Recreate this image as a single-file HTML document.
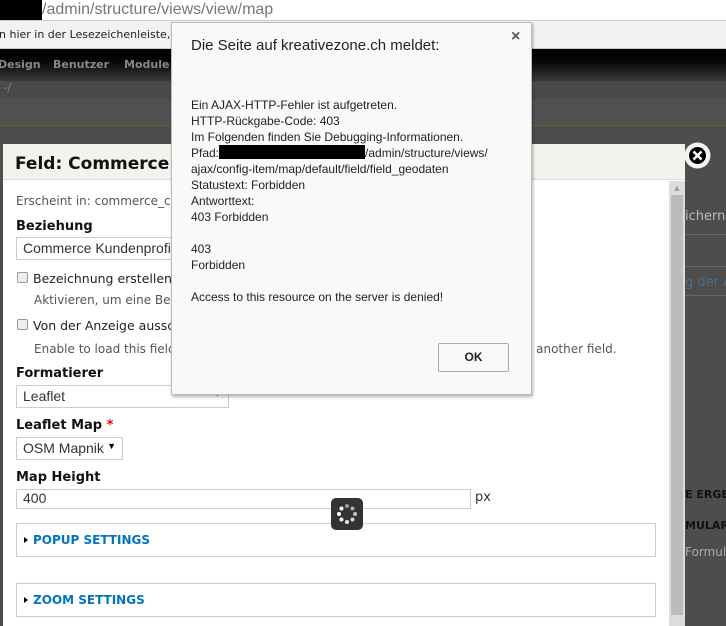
<!DOCTYPE html>
<html><head><meta charset="utf-8"><style>
*{margin:0;padding:0;box-sizing:border-box}
body{width:726px;height:626px;overflow:hidden;position:relative;background:#4d4d4d;font-family:"DejaVu Sans","Liberation Sans",sans-serif;font-size:12px;color:#222}
.abs{position:absolute}
.url{left:0;top:0;width:726px;height:21px;background:#fff;border-bottom:1px solid #ccc;font-family:"Liberation Sans",sans-serif;font-size:16px;color:#777;line-height:19px}
.bm{left:0;top:21px;width:726px;height:28px;background:#f2f2f2;border-bottom:1px solid #c8c8c8;font-size:11px;color:#222;line-height:28px}
.tb{left:0;top:49px;width:726px;height:32px;background:linear-gradient(#000 0,#080808 40%,#3a3a3a 100%)}
.tb span{position:absolute;top:9px;color:#888;font-weight:bold;font-size:11px}
.dlg{left:3px;top:144px;width:682px;height:482px;background:#fff}
.dt{left:0;top:0;width:682px;height:36px;background:#f2f2ee;border-bottom:1px solid #ddd;font-size:17px;font-weight:bold;color:#111;padding:10px 12px}
.sb{left:666px;top:37px;width:16px;height:445px;background:#ddd}
.lbl{font-weight:bold;font-size:13px;color:#111}
.inp{border:1px solid #ccc;background:#fff;font-family:"Liberation Sans",sans-serif;font-size:14px;color:#333;padding:2px 6px}
.cb{width:11px;height:11px;border:1px solid #999;border-radius:2px;background:#eee}
.desc{color:#555;font-size:12px}
.fs{border:1px solid #ccc;height:34px;width:640px}
.fs b{color:#0074bd;font-size:12px;position:absolute;left:16px;top:9px}
.fs i{position:absolute;left:7px;top:13px;width:0;height:0;border-left:4px solid #000;border-top:3px solid transparent;border-bottom:3px solid transparent}
.al{left:171px;top:22px;width:361px;height:373px;background:#f9f9f9;border:1px solid #bbb;box-shadow:1px 2px 3px rgba(0,0,0,.3);font-family:"Liberation Sans",sans-serif}
.al .t{position:absolute;left:19px;top:14px;font-size:15px;color:#222}
.al .b{position:absolute;left:19px;top:74px;font-size:12px;line-height:16px;color:#222}
.ok{left:266px;top:320px;width:71px;height:29px;border:1px solid #aaa;border-radius:2px;background:#f8f8f8;font-weight:bold;font-size:12px;text-align:center;line-height:27px}
.rt{color:#aaa;font-size:13px}
</style></head><body>
<div class="abs url"><div class="abs" style="left:0;top:0;width:42px;height:20px;background:#000"></div><span class="abs" style="left:42px;top:0">/admin/structure/views/view/map</span></div>
<div class="abs bm"><span style="margin-left:-1px">n hier in der Lesezeichenleiste, ur</span></div>
<div class="abs tb"><span style="left:-2px">Design</span><span style="left:53px">Benutzer</span><span style="left:124px">Module</span></div>
<div class="abs" style="left:0;top:81px;width:726px;height:18px;background:#4a4a4a;color:#888;font-size:11px">&nbsp;-/</div>
<div class="abs" style="left:0;top:99px;width:726px;height:26px;background:#505050;border-top:1px solid #5a5230"></div>
<div class="abs" style="left:0;top:125px;width:726px;border-top:1px solid #6a5e2a"></div>
<div class="abs" style="left:685px;top:205px;width:41px;height:30px;border-bottom:1px solid #666;color:#bbb;font-size:13px;padding-top:4px;white-space:nowrap;overflow:hidden">ichern</div>
<div class="abs" style="left:685px;top:266px;width:41px;height:30px;border-top:1px solid #666;border-bottom:1px solid #666;color:#4a6e8a;font-size:13px;padding-top:8px;white-space:nowrap;overflow:hidden">g der A</div>
<div class="abs" style="left:685px;top:488px;width:41px;color:#111;font-weight:bold;font-size:11px;white-space:nowrap;overflow:hidden">E ERGEB</div>
<div class="abs" style="left:685px;top:519px;width:41px;color:#111;font-weight:bold;font-size:11px;white-space:nowrap;overflow:hidden">MULAR</div>
<div class="abs" style="left:685px;top:545px;width:41px;color:#aaa;font-size:12px;white-space:nowrap;overflow:hidden">Formul</div>

<div class="abs dlg">
 <div class="abs dt">Feld: Commerce Kundenprofil</div>
 <div class="abs sb"><div style="height:14px;background:#ddd;color:#999;font-size:7px;text-align:center;line-height:14px">▲</div><div style="margin:0 2px;height:420px;background:#bbb"></div></div>
 <div class="abs desc" style="left:13px;top:50px">Erscheint in: commerce_customer_profile</div>
 <div class="abs lbl" style="left:13px;top:75px">Beziehung</div>
 <div class="abs inp" style="left:13px;top:93px;width:212px;height:23px">Commerce Kundenprofil</div>
 <div class="abs cb" style="left:14px;top:128px"></div>
 <div class="abs" style="left:30px;top:127px;font-size:12.5px">Bezeichnung erstellen</div>
 <div class="abs desc" style="left:31px;top:149px">Aktivieren, um eine Bezeichnung</div>
 <div class="abs cb" style="left:14px;top:175px"></div>
 <div class="abs" style="left:30px;top:174px;font-size:12.5px">Von der Anzeige ausschließen</div>
 <div class="abs desc" style="left:31px;top:198px">Enable to load this field as hidden. Often used to group fields, or to use as token in another field.</div>
 <div class="abs lbl" style="left:13px;top:222px">Formatierer</div>
 <div class="abs inp" style="left:13px;top:241px;width:213px;height:23px">Leaflet<span style="position:absolute;right:6px;top:2px;font-size:9px;color:#000">▼</span></div>
 <div class="abs lbl" style="left:13px;top:274px">Leaflet Map <span style="color:#e00">*</span></div>
 <div class="abs inp" style="left:13px;top:293px;width:107px;height:23px">OSM Mapnik<span style="position:absolute;right:6px;top:3px;font-size:9px;color:#000">▼</span></div>
 <div class="abs lbl" style="left:13px;top:326px">Map Height</div>
 <div class="abs inp" style="left:13px;top:345px;width:455px;height:20px;padding-top:0">400</div>
 <div class="abs" style="left:472px;top:346px;font-size:13px;color:#333">px</div>
 <div class="abs fs" style="left:13px;top:379px"><i></i><b>POPUP SETTINGS</b></div>
 <div class="abs fs" style="left:13px;top:439px"><i></i><b>ZOOM SETTINGS</b></div>
</div>
<svg class="abs" style="left:683px;top:141px" width="29" height="29"><circle cx="14.5" cy="14.5" r="13" fill="#f2f2ee"/><circle cx="14.5" cy="14.5" r="9" fill="#000" stroke="#fff" stroke-width="1"/><path d="M10.5 10.5L18.5 18.5M18.5 10.5L10.5 18.5" stroke="#fff" stroke-width="2.6"/></svg>
<svg class="abs" style="left:331px;top:498px" width="32" height="32"><rect width="32" height="32" rx="5" fill="#333"/><g fill="#fff"><circle cx="16" cy="8" r="2" opacity=".5"/><circle cx="21.5" cy="10.5" r="2" opacity=".6"/><circle cx="24" cy="16" r="2" opacity=".7"/><circle cx="21.5" cy="21.5" r="2" opacity=".8"/><circle cx="16" cy="24" r="2" opacity=".9"/><circle cx="10.5" cy="21.5" r="2"/><circle cx="8" cy="16" r="2"/><circle cx="10.5" cy="10.5" r="2"/></g></svg>

<div class="abs al">
 <div class="t">Die Seite auf kreativezone.ch meldet:</div>
 <div class="abs" style="left:339px;top:5px;font-size:16px;color:#555;font-weight:bold">×</div>
 <div class="b">Ein AJAX-HTTP-Fehler ist aufgetreten.<br>HTTP-Rückgabe-Code: 403<br>Im Folgenden finden Sie Debugging-Informationen.<br>Pfad:<span style="display:inline-block;width:146px;height:14px;background:#000;vertical-align:-2px"></span>/admin/structure/views/<br>ajax/config-item/map/default/field/field_geodaten<br>Statustext: Forbidden<br>Antworttext:<br>403 Forbidden<br><br>403<br>Forbidden<br><br>Access to this resource on the server is denied!</div>
 <div class="abs ok">OK</div>
</div>
</body></html>
